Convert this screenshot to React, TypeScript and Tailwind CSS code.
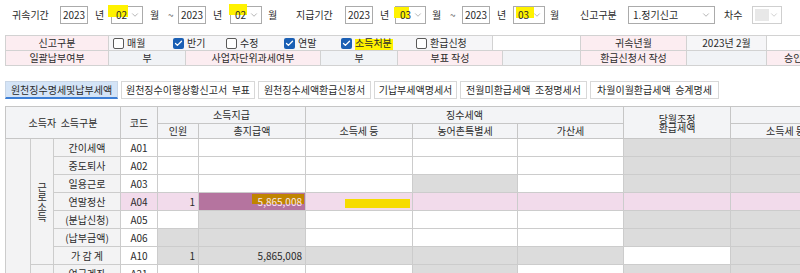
import { Check, ChevronDown } from "lucide-react";

function YearBox({ className = "" }: { className?: string }) {
  return (
    <div
      className={`flex h-[18px] w-[28px] shrink-0 items-center justify-center border border-[#ababab] bg-white text-[10px] ${className}`}
    >
      2023
    </div>
  );
}

function MonthSelect({
  value,
  className = "",
  hl = "",
}: {
  value: string;
  className?: string;
  hl?: string;
}) {
  return (
    <div
      className={`relative flex h-[18px] w-[32px] shrink-0 items-center justify-between border border-[#ababab] bg-white pl-[4px] pr-[2px] text-[10px] ${className}`}
    >
      <span className="relative z-10">{value}</span>
      <ChevronDown className="h-[10px] w-[10px] text-[#8a8a8a]" strokeWidth={1.5} />
      {hl && <span className={`absolute z-0 bg-[#fff200] ${hl}`} />}
    </div>
  );
}

function CB({ checked, label, hl = false, w }: { checked: boolean; label: string; hl?: boolean; w: string }) {
  return (
    <div className={`flex shrink-0 items-center gap-[3px] ${w}`}>
      {checked ? (
        <span className="flex h-[11px] w-[11px] items-center justify-center rounded-[2px] bg-[#1a5fb4]">
          <Check className="h-[9px] w-[9px] text-white" strokeWidth={3.5} />
        </span>
      ) : (
        <span className="h-[11px] w-[11px] rounded-[2px] border border-[#5a5a5a] bg-white" />
      )}
      <span className="relative whitespace-nowrap">
        {hl && <span className="absolute left-0 top-[1px] h-[11px] w-[38px] bg-[#fff200]" />}
        <span className="relative">{label}</span>
      </span>
    </div>
  );
}

type C = "W" | "G" | "P";
const cellBg: Record<C, string> = {
  W: "bg-white",
  G: "bg-[#dcdcdc]",
  P: "bg-[#f2dbeb]",
};

const rows: { label: string; code: string; cells: C[]; people?: string; amount?: string }[] = [
  { label: "간이세액", code: "A01", cells: ["W", "W", "W", "W", "W", "G", "G"] },
  { label: "중도퇴사", code: "A02", cells: ["W", "W", "W", "W", "W", "G", "G"] },
  { label: "일용근로", code: "A03", cells: ["W", "W", "W", "G", "W", "G", "G"] },
  { label: "연말정산", code: "A04", cells: ["P", "P", "P", "P", "P", "P", "P"], people: "1" },
  { label: "(분납신청)", code: "A05", cells: ["W", "G", "W", "W", "W", "G", "G"] },
  { label: "(납부금액)", code: "A06", cells: ["G", "G", "W", "W", "W", "G", "G"] },
  { label: "가 감 계", code: "A10", cells: ["G", "G", "G", "G", "G", "W", "G"], people: "1", amount: "5,865,008" },
];

const td = "h-[18px] border border-[#cccccc] p-0";
const th = "border border-[#c6c6c6] bg-[#f3f4f6] p-0 font-normal";

export default function App() {
  return (
    <div className="relative h-[273px] w-[800px] overflow-hidden bg-white font-['Noto_Sans_CJK_KR',sans-serif] text-[10px] leading-none text-[#2b2b2b]">
      {/* 기간 조회 조건 */}
      <div className="flex h-[30px] items-center pl-[12px]">
        <span className="w-[38px] shrink-0">귀속기간</span>
        <YearBox className="ml-[10px]" />
        <span className="ml-[7px] w-[10px] shrink-0">년</span>
        <MonthSelect value="02" className="ml-[6px]" hl="-left-[4px] -top-[2px] h-[12px] w-[20px]" />
        <span className="ml-[7px] w-[10px] shrink-0">월</span>
        <span className="ml-[8px] w-[6px] shrink-0 text-[#666]">~</span>
        <YearBox className="ml-[4px]" />
        <span className="ml-[7px] w-[10px] shrink-0">년</span>
        <MonthSelect value="02" className="ml-[7px]" hl="-left-[2px] -top-[3px] h-[11px] w-[18px]" />
        <span className="ml-[6px] w-[10px] shrink-0">월</span>
        <span className="ml-[18px] w-[38px] shrink-0">지급기간</span>
        <YearBox className="ml-[11px]" />
        <span className="ml-[7px] w-[10px] shrink-0">년</span>
        <MonthSelect value="03" className="ml-[5px] !w-[31px]" hl="-left-[2px] top-[0px] h-[11px] w-[15px]" />
        <span className="ml-[6px] w-[10px] shrink-0">월</span>
        <span className="ml-[8px] w-[6px] shrink-0 text-[#666]">~</span>
        <YearBox className="ml-[6px]" />
        <span className="ml-[7px] w-[10px] shrink-0">년</span>
        <MonthSelect value="03" className="ml-[6px]" hl="left-[2px] top-[0px] h-[11px] w-[18px]" />
        <span className="ml-[5px] w-[10px] shrink-0">월</span>
        <span className="ml-[20px] w-[40px] shrink-0">신고구분</span>
        <div className="ml-[8px] flex h-[18px] w-[87px] shrink-0 items-center justify-between border border-[#ababab] bg-white pl-[4px] pr-[3px]">
          <span>1.정기신고</span>
          <ChevronDown className="h-[10px] w-[10px] text-[#8a8a8a]" strokeWidth={1.5} />
        </div>
        <span className="ml-[9px] w-[20px] shrink-0">차수</span>
        <div className="ml-[8px] flex h-[18px] w-[30px] shrink-0 items-center justify-between border border-[#cfcfcf] bg-white pl-[2px] pr-[2px]">
          <span className="h-[12px] w-[14px] bg-[#e8e8e8]" />
          <ChevronDown className="h-[10px] w-[10px] text-[#b5b5b5]" strokeWidth={1.5} />
        </div>
      </div>

      {/* 신고 정보 */}
      <div className="ml-[5px] mt-[5px] border-l border-t border-[#d2d2d2]">
        <div className="flex h-[15px]">
          <div className="flex w-[103px] shrink-0 items-center justify-center border-b border-r border-[#d2d2d2] bg-[#fcedf1]">신고구분</div>
          <div className="flex w-[384px] shrink-0 items-center border-b border-r border-[#d2d2d2] bg-[#f6f6f8] pl-[4px]">
            <CB checked={false} label="매월" w="w-[60px]" />
            <CB checked label="반기" w="w-[53px]" />
            <CB checked={false} label="수정" w="w-[58px]" />
            <CB checked label="연말" w="w-[57px]" />
            <CB checked label="소득처분" hl w="w-[75px]" />
            <CB checked={false} label="환급신청" w="w-[70px]" />
          </div>
          <div className="w-[88px] shrink-0 border-b border-r border-[#d2d2d2] bg-white" />
          <div className="flex w-[106px] shrink-0 items-center justify-center border-b border-r border-[#d2d2d2] bg-[#fcedf1]">귀속년월</div>
          <div className="flex w-[80px] shrink-0 items-center justify-center border-b border-r border-[#d2d2d2] bg-[#f6f6f8]">2023년 2월</div>
          <div className="flex-1 border-b border-[#d2d2d2] bg-white" />
        </div>
        <div className="flex h-[15px]">
          <div className="flex w-[103px] shrink-0 items-center justify-center border-b border-r border-[#d2d2d2] bg-[#fcedf1]">일괄납부여부</div>
          <div className="flex w-[77px] shrink-0 items-center justify-center border-b border-r border-[#d2d2d2] bg-[#f1f3f6]">부</div>
          <div className="flex w-[135px] shrink-0 items-center justify-center border-b border-r border-[#d2d2d2] bg-[#fcedf1]">사업자단위과세여부</div>
          <div className="flex w-[77px] shrink-0 items-center justify-center border-b border-r border-[#d2d2d2] bg-[#f1f3f6]">부</div>
          <div className="flex w-[105px] shrink-0 items-center justify-center border-b border-r border-[#d2d2d2] bg-[#fcedf1]">부표 작성</div>
          <div className="w-[78px] shrink-0 border-b border-r border-[#d2d2d2] bg-[#f1f3f6]" />
          <div className="flex w-[106px] shrink-0 items-center justify-center border-b border-r border-[#d2d2d2] bg-[#fcedf1]">환급신청서 작성</div>
          <div className="w-[80px] shrink-0 border-b border-r border-[#d2d2d2] bg-[#f1f3f6]" />
          <div className="flex min-w-0 flex-1 items-center overflow-hidden whitespace-nowrap border-b border-[#d2d2d2] bg-[#fcedf1] pl-[17px]">승인신청</div>
        </div>
      </div>

      {/* 탭 */}
      <div className="ml-[5px] mt-[15px] flex h-[18px] gap-[3px] whitespace-nowrap">
        <div className="flex w-[113px] items-center justify-center border border-b-2 border-[#c9d6e6] border-b-[#3d7fd6] bg-[#d4e4f7]">원천징수명세및납부세액</div>
        <div className="flex w-[134px] items-center justify-center border border-[#d8d8d8] bg-white">원천징수이행상황신고서&nbsp; 부표</div>
        <div className="flex w-[113px] items-center justify-center border border-[#d8d8d8] bg-white">원천징수세액환급신청서</div>
        <div className="flex w-[83px] items-center justify-center border border-[#d8d8d8] bg-white">기납부세액명세서</div>
        <div className="flex w-[127px] items-center justify-center border border-[#d8d8d8] bg-white">전월미환급세액&nbsp; 조정명세서</div>
        <div className="flex w-[129px] items-center justify-center border border-[#d8d8d8] bg-white">차월이월환급세액&nbsp; 승계명세</div>
      </div>

      {/* 명세 그리드 */}
      <table className="ml-[5px] mt-[7px] w-[835px] table-fixed">
        <colgroup>
          <col className="w-[25px]" />
          <col className="w-[23px]" />
          <col className="w-[67px]" />
          <col className="w-[37px]" />
          <col className="w-[41px]" />
          <col className="w-[107px]" />
          <col className="w-[107px]" />
          <col className="w-[105px]" />
          <col className="w-[106px]" />
          <col className="w-[107px]" />
          <col className="w-[110px]" />
        </colgroup>
        <thead>
          <tr className="h-[17px]">
            <th colSpan={3} rowSpan={2} className={th}>소득자&nbsp; 소득구분</th>
            <th rowSpan={2} className={th}>코드</th>
            <th colSpan={2} className={th}>소득지급</th>
            <th colSpan={3} className={th}>징수세액</th>
            <th rowSpan={2} className={`${th} leading-[9px]`}>
              당월조정
              <br />
              환급세액
            </th>
            <th className={th} />
          </tr>
          <tr className="h-[15px]">
            <th className={th}>인원</th>
            <th className={th}>총지급액</th>
            <th className={th}>소득세 등</th>
            <th className={th}>농어촌특별세</th>
            <th className={th}>가산세</th>
            <th className={`${th} whitespace-nowrap`}>소득세 등</th>
          </tr>
        </thead>
        <tbody>
          {rows.map((r, i) => (
            <tr key={r.code} className="h-[18px]">
              {i === 0 && <td rowSpan={8} className={`${td} bg-[#f3f3f4]`} />}
              {i === 0 && (
                <td rowSpan={7} className={`${td} bg-[#f3f3f4]`}>
                  <div className="flex flex-col items-center leading-[10px]">
                    <span>근</span>
                    <span>로</span>
                    <span>소</span>
                    <span>득</span>
                  </div>
                </td>
              )}
              <td className={`${td} bg-[#f3f3f4] text-center`}>{r.label}</td>
              <td className={`${td} ${r.code === "A04" ? "bg-[#f2dbeb]" : "bg-white"} text-center`}>{r.code}</td>
              <td className={`${td} ${cellBg[r.cells[0]]} pr-[3px] text-right`}>{r.people}</td>
              {r.code === "A04" ? (
                <td className={`${td} relative bg-[#b5749f] pr-[3px] text-right`}>
                  <span className="absolute right-[1px] top-[1px] h-[10px] w-[52px] bg-[#c08400]" />
                  <span className="relative text-[#fbe7ef]">5,865,008</span>
                </td>
              ) : (
                <td className={`${td} ${cellBg[r.cells[1]]} pr-[3px] text-right`}>{r.amount}</td>
              )}
              <td className={`${td} ${cellBg[r.cells[2]]} relative`}>
                {r.code === "A04" && <span className="absolute left-[39px] top-[6px] h-[9px] w-[65px] bg-[#f6dc00]" />}
              </td>
              <td className={`${td} ${cellBg[r.cells[3]]}`} />
              <td className={`${td} ${cellBg[r.cells[4]]}`} />
              <td className={`${td} ${cellBg[r.cells[5]]}`} />
              <td className={`${td} ${cellBg[r.cells[6]]}`} />
            </tr>
          ))}
          <tr className="h-[18px]">
            <td className={`${td} bg-[#f3f3f4]`} />
            <td className={`${td} bg-[#f3f3f4] text-center`}>연금계좌</td>
            <td className={`${td} bg-white text-center`}>A21</td>
            <td className={`${td} bg-white`} />
            <td className={`${td} bg-white`} />
            <td className={`${td} bg-white`} />
            <td className={`${td} bg-[#dcdcdc]`} />
            <td className={`${td} bg-white`} />
            <td className={`${td} bg-[#dcdcdc]`} />
            <td className={`${td} bg-[#dcdcdc]`} />
          </tr>
        </tbody>
      </table>
    </div>
  );
}
